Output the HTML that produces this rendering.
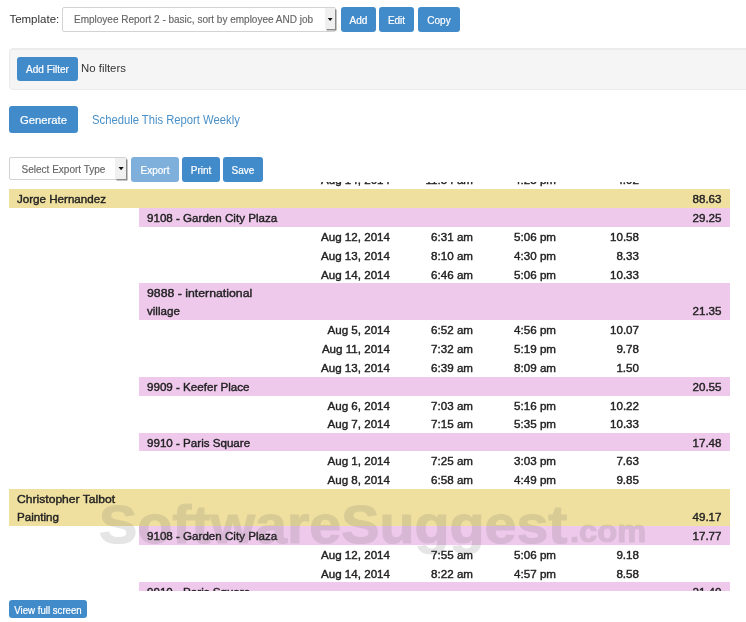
<!DOCTYPE html>
<html><head><meta charset="utf-8"><style>
html,body{margin:0;padding:0;background:#fff;width:746px;height:622px;overflow:hidden;position:relative;}
#wrap{position:absolute;left:0;top:0;width:746px;height:622px;will-change:transform;background:#fff;}
body{font-family:"Liberation Sans",sans-serif;}
.t{position:absolute;white-space:nowrap;}
.clip .t{-webkit-text-stroke:0.4px #222;}
.btn{position:absolute;border-radius:3px;}
.bt{-webkit-text-stroke:0.2px #fff;}
.sel{position:absolute;box-sizing:border-box;border:1px solid #d3d3d3;border-radius:2px;background:#fff;}
.arr{position:absolute;background:#f0f0f0;box-shadow:1.5px 1.5px 0 #8a8a8a;}
.tri{position:absolute;width:5.6px;height:3.4px;background:#111;clip-path:polygon(0 0,100% 0,50% 100%);}
.well{position:absolute;box-sizing:border-box;background:#f5f5f5;border:1px solid #ebebeb;border-radius:4px;box-shadow:inset 0 1px 1px rgba(0,0,0,.04);}
.clip{position:absolute;overflow:hidden;}
.row{position:absolute;}
.wm{position:absolute;white-space:nowrap;font-weight:bold;color:#555;opacity:0.145;line-height:80px;-webkit-text-stroke:1.2px #555;}
</style></head><body><div id="wrap">
<div class="t" style="left:9.4px;top:9.41px;font-size:11.5px;line-height:20px;color:#333;font-weight:normal;">Template:</div>
<div class="sel" style="left:62px;top:7px;width:274px;height:24.5px;"></div>
<div class="arr" style="left:325px;top:8px;width:10px;height:21px;"></div>
<div class="tri" style="left:327.4px;top:17.6px;"></div>
<div class="t" style="left:74px;top:9.63px;font-size:10px;line-height:20px;color:#666;font-weight:normal;-webkit-text-stroke:0.15px #666;">Employee Report 2 - basic, sort by employee AND job</div>
<div class="btn" style="left:341px;top:7px;width:35px;height:25px;background:#428bca;"></div>
<div class="t bt" style="left:341px;width:35px;text-align:center;top:11.13px;font-size:10px;line-height:20px;color:#fff;">Add</div>
<div class="btn" style="left:379px;top:7px;width:35px;height:25px;background:#428bca;"></div>
<div class="t bt" style="left:379px;width:35px;text-align:center;top:11.13px;font-size:10px;line-height:20px;color:#fff;">Edit</div>
<div class="btn" style="left:418px;top:7px;width:42px;height:25px;background:#428bca;"></div>
<div class="t bt" style="left:418px;width:42px;text-align:center;top:11.13px;font-size:10px;line-height:20px;color:#fff;">Copy</div>
<div class="well" style="left:8.5px;top:47.5px;width:760px;height:42px;"></div>
<div class="btn" style="left:17px;top:56.5px;width:61px;height:24.5px;background:#428bca;"></div>
<div class="t bt" style="left:17px;width:61px;text-align:center;top:59.83px;font-size:10px;line-height:20px;color:#fff;">Add Filter</div>
<div class="t" style="left:81px;top:58.35px;font-size:11.4px;line-height:20px;color:#333;font-weight:normal;">No filters</div>
<div class="btn" style="left:9px;top:106px;width:69px;height:27px;background:#428bca;"></div>
<div class="t bt" style="left:9px;width:69px;text-align:center;top:110.28px;font-size:11.3px;line-height:20px;color:#fff;">Generate</div>
<div class="t" style="left:91.5px;top:110.27px;font-size:12.5px;line-height:20px;color:#4a90c8;font-weight:normal;transform:scaleX(0.9);transform-origin:0 0;">Schedule This Report Weekly</div>
<div class="sel" style="left:9px;top:157px;width:118px;height:23px;"></div>
<div class="arr" style="left:115.4px;top:158px;width:10.6px;height:21px;"></div>
<div class="tri" style="left:118.3px;top:166.8px;"></div>
<div class="t" style="left:21.6px;top:160.13px;font-size:10px;line-height:20px;color:#666;font-weight:normal;-webkit-text-stroke:0.15px #666;">Select Export Type</div>
<div class="btn" style="left:131px;top:157px;width:48px;height:25px;background:#7fb0dc;"></div>
<div class="t bt" style="left:131px;width:48px;text-align:center;top:160.93px;font-size:10px;line-height:20px;color:#fff;">Export</div>
<div class="btn" style="left:182px;top:157px;width:38px;height:25px;background:#428bca;"></div>
<div class="t bt" style="left:182px;width:38px;text-align:center;top:160.93px;font-size:10px;line-height:20px;color:#fff;">Print</div>
<div class="btn" style="left:223px;top:157px;width:40px;height:25px;background:#428bca;"></div>
<div class="t bt" style="left:223px;width:40px;text-align:center;top:160.93px;font-size:10px;line-height:20px;color:#fff;">Save</div>
<div class="clip" style="left:0;top:182px;width:746px;height:409px;"><div style="position:absolute;left:0;top:-182px;width:746px;height:622px;">
<div class="t" style="right:356px;top:170.38px;font-size:11.6px;line-height:20px;color:#222;font-weight:normal;">Aug 14, 2014</div>
<div class="t" style="right:273px;top:170.38px;font-size:11.6px;line-height:20px;color:#222;font-weight:normal;">11:54 am</div>
<div class="t" style="right:190px;top:170.38px;font-size:11.6px;line-height:20px;color:#222;font-weight:normal;">4:25 pm</div>
<div class="t" style="right:107px;top:170.38px;font-size:11.6px;line-height:20px;color:#222;font-weight:normal;">4.92</div>
<div class="row" style="left:9px;top:189.20px;width:721px;height:18.80px;background:#f0e0a0"></div>
<div class="t" style="left:17px;top:189.28px;font-size:11.6px;line-height:20px;color:#222;font-weight:normal;">Jorge Hernandez</div>
<div class="t" style="right:24.5px;top:189.28px;font-size:11.6px;line-height:20px;color:#222;font-weight:normal;">88.63</div>
<div class="row" style="left:139px;top:208.00px;width:591px;height:18.90px;background:#efc9ec"></div>
<div class="t" style="left:147px;top:208.08px;font-size:11.6px;line-height:20px;color:#222;font-weight:normal;">9108 - Garden City Plaza</div>
<div class="t" style="right:24.5px;top:208.08px;font-size:11.6px;line-height:20px;color:#222;font-weight:normal;">29.25</div>
<div class="t" style="right:356px;top:226.98px;font-size:11.6px;line-height:20px;color:#222;font-weight:normal;">Aug 12, 2014</div>
<div class="t" style="right:273px;top:226.98px;font-size:11.6px;line-height:20px;color:#222;font-weight:normal;">6:31 am</div>
<div class="t" style="right:190px;top:226.98px;font-size:11.6px;line-height:20px;color:#222;font-weight:normal;">5:06 pm</div>
<div class="t" style="right:107px;top:226.98px;font-size:11.6px;line-height:20px;color:#222;font-weight:normal;">10.58</div>
<div class="t" style="right:356px;top:245.88px;font-size:11.6px;line-height:20px;color:#222;font-weight:normal;">Aug 13, 2014</div>
<div class="t" style="right:273px;top:245.88px;font-size:11.6px;line-height:20px;color:#222;font-weight:normal;">8:10 am</div>
<div class="t" style="right:190px;top:245.88px;font-size:11.6px;line-height:20px;color:#222;font-weight:normal;">4:30 pm</div>
<div class="t" style="right:107px;top:245.88px;font-size:11.6px;line-height:20px;color:#222;font-weight:normal;">8.33</div>
<div class="t" style="right:356px;top:264.68px;font-size:11.6px;line-height:20px;color:#222;font-weight:normal;">Aug 14, 2014</div>
<div class="t" style="right:273px;top:264.68px;font-size:11.6px;line-height:20px;color:#222;font-weight:normal;">6:46 am</div>
<div class="t" style="right:190px;top:264.68px;font-size:11.6px;line-height:20px;color:#222;font-weight:normal;">5:06 pm</div>
<div class="t" style="right:107px;top:264.68px;font-size:11.6px;line-height:20px;color:#222;font-weight:normal;">10.33</div>
<div class="row" style="left:139px;top:283.40px;width:591px;height:36.40px;background:#efc9ec"></div>
<div class="t" style="left:147px;top:283.48px;font-size:11.6px;line-height:20px;color:#222;font-weight:normal;transform:scaleX(1.06);transform-origin:0 0;">9888 - international</div>
<div class="t" style="left:147px;top:301.48px;font-size:11.6px;line-height:20px;color:#222;font-weight:normal;">village</div>
<div class="t" style="right:24.5px;top:301.48px;font-size:11.6px;line-height:20px;color:#222;font-weight:normal;">21.35</div>
<div class="t" style="right:356px;top:319.88px;font-size:11.6px;line-height:20px;color:#222;font-weight:normal;">Aug 5, 2014</div>
<div class="t" style="right:273px;top:319.88px;font-size:11.6px;line-height:20px;color:#222;font-weight:normal;">6:52 am</div>
<div class="t" style="right:190px;top:319.88px;font-size:11.6px;line-height:20px;color:#222;font-weight:normal;">4:56 pm</div>
<div class="t" style="right:107px;top:319.88px;font-size:11.6px;line-height:20px;color:#222;font-weight:normal;">10.07</div>
<div class="t" style="right:356px;top:338.78px;font-size:11.6px;line-height:20px;color:#222;font-weight:normal;">Aug 11, 2014</div>
<div class="t" style="right:273px;top:338.78px;font-size:11.6px;line-height:20px;color:#222;font-weight:normal;">7:32 am</div>
<div class="t" style="right:190px;top:338.78px;font-size:11.6px;line-height:20px;color:#222;font-weight:normal;">5:19 pm</div>
<div class="t" style="right:107px;top:338.78px;font-size:11.6px;line-height:20px;color:#222;font-weight:normal;">9.78</div>
<div class="t" style="right:356px;top:357.68px;font-size:11.6px;line-height:20px;color:#222;font-weight:normal;">Aug 13, 2014</div>
<div class="t" style="right:273px;top:357.68px;font-size:11.6px;line-height:20px;color:#222;font-weight:normal;">6:39 am</div>
<div class="t" style="right:190px;top:357.68px;font-size:11.6px;line-height:20px;color:#222;font-weight:normal;">8:09 am</div>
<div class="t" style="right:107px;top:357.68px;font-size:11.6px;line-height:20px;color:#222;font-weight:normal;">1.50</div>
<div class="row" style="left:139px;top:376.60px;width:591px;height:19.00px;background:#efc9ec"></div>
<div class="t" style="left:147px;top:376.68px;font-size:11.6px;line-height:20px;color:#222;font-weight:normal;">9909 - Keefer Place</div>
<div class="t" style="right:24.5px;top:376.68px;font-size:11.6px;line-height:20px;color:#222;font-weight:normal;">20.55</div>
<div class="t" style="right:356px;top:395.68px;font-size:11.6px;line-height:20px;color:#222;font-weight:normal;">Aug 6, 2014</div>
<div class="t" style="right:273px;top:395.68px;font-size:11.6px;line-height:20px;color:#222;font-weight:normal;">7:03 am</div>
<div class="t" style="right:190px;top:395.68px;font-size:11.6px;line-height:20px;color:#222;font-weight:normal;">5:16 pm</div>
<div class="t" style="right:107px;top:395.68px;font-size:11.6px;line-height:20px;color:#222;font-weight:normal;">10.22</div>
<div class="t" style="right:356px;top:414.18px;font-size:11.6px;line-height:20px;color:#222;font-weight:normal;">Aug 7, 2014</div>
<div class="t" style="right:273px;top:414.18px;font-size:11.6px;line-height:20px;color:#222;font-weight:normal;">7:15 am</div>
<div class="t" style="right:190px;top:414.18px;font-size:11.6px;line-height:20px;color:#222;font-weight:normal;">5:35 pm</div>
<div class="t" style="right:107px;top:414.18px;font-size:11.6px;line-height:20px;color:#222;font-weight:normal;">10.33</div>
<div class="row" style="left:139px;top:432.70px;width:591px;height:18.40px;background:#efc9ec"></div>
<div class="t" style="left:147px;top:432.78px;font-size:11.6px;line-height:20px;color:#222;font-weight:normal;">9910 - Paris Square</div>
<div class="t" style="right:24.5px;top:432.78px;font-size:11.6px;line-height:20px;color:#222;font-weight:normal;">17.48</div>
<div class="t" style="right:356px;top:451.18px;font-size:11.6px;line-height:20px;color:#222;font-weight:normal;">Aug 1, 2014</div>
<div class="t" style="right:273px;top:451.18px;font-size:11.6px;line-height:20px;color:#222;font-weight:normal;">7:25 am</div>
<div class="t" style="right:190px;top:451.18px;font-size:11.6px;line-height:20px;color:#222;font-weight:normal;">3:03 pm</div>
<div class="t" style="right:107px;top:451.18px;font-size:11.6px;line-height:20px;color:#222;font-weight:normal;">7.63</div>
<div class="t" style="right:356px;top:469.98px;font-size:11.6px;line-height:20px;color:#222;font-weight:normal;">Aug 8, 2014</div>
<div class="t" style="right:273px;top:469.98px;font-size:11.6px;line-height:20px;color:#222;font-weight:normal;">6:58 am</div>
<div class="t" style="right:190px;top:469.98px;font-size:11.6px;line-height:20px;color:#222;font-weight:normal;">4:49 pm</div>
<div class="t" style="right:107px;top:469.98px;font-size:11.6px;line-height:20px;color:#222;font-weight:normal;">9.85</div>
<div class="row" style="left:9px;top:488.70px;width:721px;height:37.60px;background:#f0e0a0"></div>
<div class="t" style="left:17px;top:488.78px;font-size:11.6px;line-height:20px;color:#222;font-weight:normal;transform:scaleX(1.045);transform-origin:0 0;">Christopher Talbot</div>
<div class="t" style="left:17px;top:506.78px;font-size:11.6px;line-height:20px;color:#222;font-weight:normal;">Painting</div>
<div class="t" style="right:24.5px;top:506.78px;font-size:11.6px;line-height:20px;color:#222;font-weight:normal;">49.17</div>
<div class="row" style="left:139px;top:526.30px;width:591px;height:19.10px;background:#efc9ec"></div>
<div class="t" style="left:147px;top:526.38px;font-size:11.6px;line-height:20px;color:#222;font-weight:normal;">9108 - Garden City Plaza</div>
<div class="t" style="right:24.5px;top:526.38px;font-size:11.6px;line-height:20px;color:#222;font-weight:normal;">17.77</div>
<div class="t" style="right:356px;top:545.48px;font-size:11.6px;line-height:20px;color:#222;font-weight:normal;">Aug 12, 2014</div>
<div class="t" style="right:273px;top:545.48px;font-size:11.6px;line-height:20px;color:#222;font-weight:normal;">7:55 am</div>
<div class="t" style="right:190px;top:545.48px;font-size:11.6px;line-height:20px;color:#222;font-weight:normal;">5:06 pm</div>
<div class="t" style="right:107px;top:545.48px;font-size:11.6px;line-height:20px;color:#222;font-weight:normal;">9.18</div>
<div class="t" style="right:356px;top:564.08px;font-size:11.6px;line-height:20px;color:#222;font-weight:normal;">Aug 14, 2014</div>
<div class="t" style="right:273px;top:564.08px;font-size:11.6px;line-height:20px;color:#222;font-weight:normal;">8:22 am</div>
<div class="t" style="right:190px;top:564.08px;font-size:11.6px;line-height:20px;color:#222;font-weight:normal;">4:57 pm</div>
<div class="t" style="right:107px;top:564.08px;font-size:11.6px;line-height:20px;color:#222;font-weight:normal;">8.58</div>
<div class="row" style="left:139px;top:582.20px;width:591px;height:18.80px;background:#efc9ec"></div>
<div class="t" style="left:147px;top:582.28px;font-size:11.6px;line-height:20px;color:#222;font-weight:normal;">9910 - Paris Square</div>
<div class="t" style="right:24.5px;top:582.28px;font-size:11.6px;line-height:20px;color:#222;font-weight:normal;">21.40</div>
</div></div>
<div class="wm" style="left:99.2px;top:483.58px;font-size:54px;line-height:80px;transform:scaleX(1.062);transform-origin:0 0;">SoftwareSuggest</div>
<div class="wm" style="left:569.5px;top:491.56px;font-size:31px;line-height:80px;transform:scaleX(1.054);transform-origin:0 0;">.com</div>
<div class="btn" style="left:9px;top:600px;width:78px;height:18px;background:#428bca;"></div>
<div class="t bt" style="left:9px;width:78px;text-align:center;top:599.76px;font-size:10.5px;line-height:20px;color:#fff;transform:scaleX(0.92);">View full screen</div>
</div></body></html>
